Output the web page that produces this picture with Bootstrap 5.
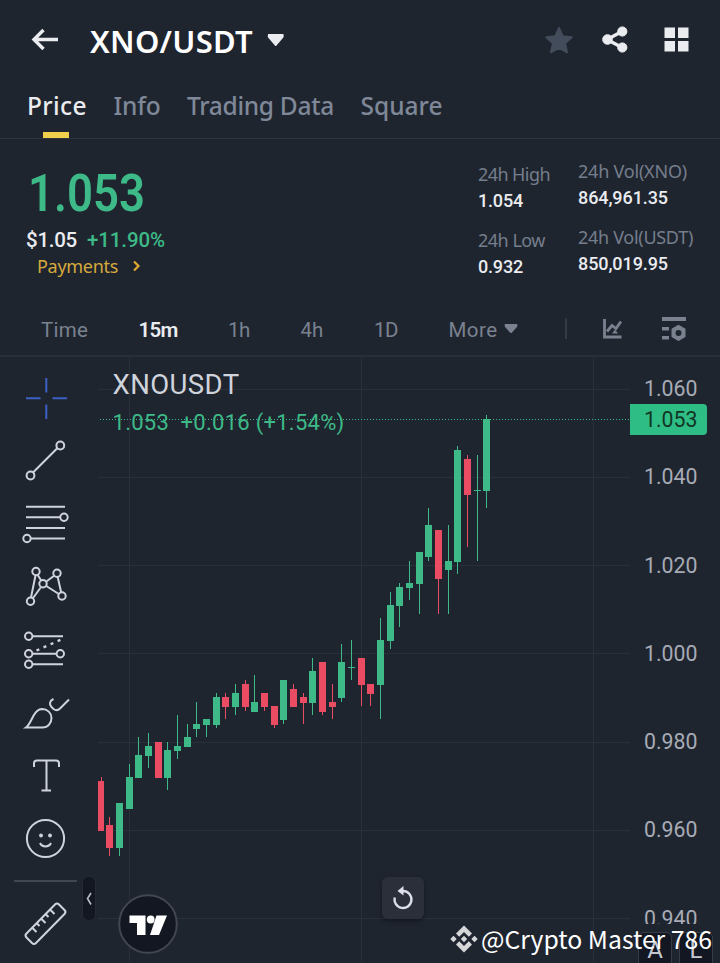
<!DOCTYPE html>
<html lang="en" data-bs-theme="dark">
<head>
<meta charset="utf-8">
<meta name="viewport" content="width=device-width, initial-scale=1">
<title>XNO/USDT</title>
<link href="https://cdn.jsdelivr.net/npm/bootstrap@5.3.0/dist/css/bootstrap.min.css" rel="stylesheet">
<style>
body{background:#1f252f;color:#eaecef;font-family:Roboto,"Liberation Sans",sans-serif;width:720px;height:963px;overflow:hidden}
svg{display:block;flex:none}
.fit{display:inline-block;white-space:pre;flex:none}
.top-bar{height:78px;padding:2px 30px 0 30px}
.pair{font-family:"Noto Sans",Roboto,sans-serif;font-size:31px;font-weight:650;line-height:40px;color:#fff;margin:1px 0 0 30px}
.tabs-row{height:61px;border-bottom:1px solid #2e353f;padding-left:27px;gap:26.500px}
.tab-item{font-family:"Noto Sans",Roboto,sans-serif;font-size:24.5px;font-weight:500;color:#7f8898;line-height:56px;height:60px}
.tab-item.on{color:#eaecef;display:flex;flex-direction:column;align-items:center}
.tab-item.on::after{content:"";width:26px;height:6px;background:#f0d04b;margin:-2px 2px 0 0}
.stats{height:164px;padding-left:27px}
.last{font-size:51px;font-weight:600;line-height:56px;color:#3dba87;margin:27px 0 0 1px}
.conv{font-size:20.5px;line-height:28px;font-weight:500;margin:4px 0 0 -1px;gap:10px}
.up{color:#3dba87}
.pay{font-family:"Noto Sans",Roboto,sans-serif;font-size:18px;line-height:24px;color:#d6a93c;margin-left:10px;gap:14px}
.stat-col{font-size:18px;line-height:26px}
.stat-col dt{font-family:"Noto Sans",Roboto,sans-serif;font-weight:400;color:#757e8c;line-height:24px;padding-bottom:2px}
.stat-col dd{margin:0 0 14px;font-weight:500;color:#eaecef}
.hi-lo{width:100px;padding-top:23px}.vols{width:142px;padding-top:20px}
.frames{height:54px;padding-left:41px;font-size:20.5px;color:#7a8290;border-bottom:2px solid #292f39}
.frames .fit{padding-top:2px;margin-right:50.500px}
.frames .fit.more{margin-right:0}
.frames .on{color:#eaecef;font-weight:600}
.chart{height:606px}
.tools{width:98px;padding-top:9px;overflow:hidden}
.tools svg{stroke:#cfd3dd;stroke-width:2;fill:none}
.axis{width:90px}
.axis-list{margin-top:-12px;height:579px;overflow:hidden}
.axis-list>div{height:88.3px;line-height:88.800px;font-size:21.300px;color:#a7abb5;padding-left:14px;flex:none}
.price-tag{left:630px;top:47px;width:77px;height:31px;background:#2ebd85;border-radius:0 4px 4px 0;color:#123524;font-size:21.300px;line-height:32px;padding-left:14px}
.legend{left:112.500px;top:11px}
.sym{font-size:27.5px;line-height:34px;color:#cfd3dc}
.chg{font-size:22px;line-height:30px;margin-top:6px;color:#3dba87}
.scale-btn{top:575px;width:34px;height:40px;background:#131722;border:1px solid #373c47;border-radius:6px;font-size:24px;line-height:34px;color:#c5c8d0;text-align:center}
.btn-a{left:638px}.btn-l{left:679px}
.reset{left:382px;top:520px;width:42px;height:42px;background:#2b2f3a;border-radius:6px;box-shadow:0 2px 5px #0006}
.fold{left:82px;top:519px}
.tv{left:118px;top:537px}
.wm{left:450px;top:564px;height:36px;gap:3px;color:#fff;font-family:"Noto Sans CJK SC",sans-serif;font-size:24.5px}
</style>
<script src="https://cdn.jsdelivr.net/npm/bootstrap@5.3.0/dist/js/bootstrap.bundle.min.js"></script>
</head>
<body>
<header class="top-bar d-flex align-items-center">
  <svg width="30" height="24" viewBox="30 28 30 24" fill="none" stroke="#eaecef" stroke-width="3.4"><path d="M58 39.5H34M43.5 30l-9.5 9.5 9.5 9.5"/></svg>
  <span class="pair"><span class="fit" data-w="163">XNO/USDT</span></span>
  <svg width="32" height="14" viewBox="254 33 32 14" fill="#eaecef"><path d="M269 34h15.500q.8 3-1 4.500l-6 7q-.8 1-1.600 0l-6-7q-1.800-1.500-.9-4.500z"/></svg>
  <svg class="ms-auto" width="28" height="28" viewBox="545 26 28 28" fill="#434c5b" stroke="#434c5b" stroke-width="2" stroke-linejoin="round"><path d="M559 28l3.700 8.300 9 1-6.700 6 2 9-8-4.500-8 4.500 2-9-6.700-6 9-1z"/></svg>
  <svg class="ms-4" width="67" height="28" viewBox="597 26 67 28" fill="#eaecef" stroke="#eaecef"><path d="M607 39.500l15-8M607 39.500l15 8" stroke-width="3.500"/><circle cx="607.500" cy="39.500" r="4.800"/><circle cx="622.300" cy="31.500" r="4.600"/><circle cx="622.300" cy="47.500" r="4.600"/></svg>
  <svg width="26" height="26" viewBox="664 27 26 26" fill="#eaecef"><path d="M664.500 27.500h10.500v10.500h-10.500zM678 27.500h10.500v10.500h-10.500zM664.500 41h10.500v10.500h-10.500zM678 41h10.500v10.500h-10.500z"/></svg>
</header>
<nav class="tabs-row d-flex">
  <div class="tab-item on"><span class="fit" data-w="60">Price</span></div>
  <div class="tab-item"><span class="fit" data-w="47">Info</span></div>
  <div class="tab-item"><span class="fit" data-w="147">Trading Data</span></div>
  <div class="tab-item"><span class="fit" data-w="82">Square</span></div>
</nav>
<section class="stats d-flex">
  <div class="flex-grow-1">
    <div class="last"><span class="fit" data-w="117" data-stretch>1.053</span></div>
    <div class="conv d-flex"><span class="fit" data-w="51">$1.05</span><span class="fit up" data-w="78">+11.90%</span></div>
    <div class="pay d-flex align-items-center"><span class="fit" data-w="81">Payments</span><svg width="10" height="12" viewBox="0 0 10 12" fill="none" stroke="#e0a92d" stroke-width="2.200"><path d="M2 1.500l4.500 4.500L2 10.500"/></svg></div>
  </div>
  <dl class="stat-col hi-lo mb-0"><dt><span class="fit" data-w="72">24h High</span></dt><dd><span class="fit" data-w="45">1.054</span></dd><dt><span class="fit" data-w="67">24h Low</span></dt><dd><span class="fit" data-w="45">0.932</span></dd></dl>
  <dl class="stat-col vols mb-0"><dt><span class="fit" data-w="109">24h Vol(XNO)</span></dt><dd><span class="fit" data-w="90">864,961.35</span></dd><dt><span class="fit" data-w="115">24h Vol(USDT)</span></dt><dd><span class="fit" data-w="90">850,019.95</span></dd></dl>
</section>
<div class="frames d-flex align-items-center">
  <span class="fit" data-w="47">Time</span>
  <span class="fit on" data-w="39">15m</span>
  <span class="fit" data-w="22">1h</span>
  <span class="fit" data-w="23">4h</span>
  <span class="fit" data-w="24">1D</span>
  <span class="fit more" data-w="49">More</span>
  <svg width="216" height="30" viewBox="497 314 216 30" fill="#7a8290"><path d="M504 324h12q1 2-.5 3.500l-4.500 5q-1 1-2 0l-4.500-5q-1.500-1.500-.5-3.500z"/><path d="M564.500 318.500h1v20.500h-1z" fill="#4a5260"/><path d="M603.500 319v18h17M606 331.500l5-6 4 3 5-7" fill="none" stroke="#7a8290" stroke-width="2.800"/><path d="M611 333.500l3-4 3 4z"/><path d="M661 317h24v4h-24zM661 327h7v3.500h-7zM661 336h7v3.500h-7z"/><path d="M677.500 325.800l6 3.500v7.200l-6 3.500-6-3.500v-7.200z" stroke="#7a8290" stroke-width="2" stroke-linejoin="round"/><circle cx="677.500" cy="333" r="3" fill="#1f252f"/></svg>
</div>
<main class="chart d-flex position-relative">
  <aside class="tools d-flex flex-column">
    <svg width="90" height="63" viewBox="0 366 90 63"><path d="M46.300 378v14.500M46.300 404.500v14.500M26 398.300h14.500M52.500 398.300h14.500" stroke="#3c60c4"/></svg>
    <svg width="90" height="63" viewBox="0 429 90 63"><path d="M33 472.500l24.500-24.500"/><circle cx="60.300" cy="445.500" r="3.900"/><circle cx="30.500" cy="475.500" r="3.900"/></svg>
    <svg width="90" height="63" viewBox="0 492 90 63"><path d="M26 506.700h39M26 517.300h34M26 528h39M31 538.500h34"/><circle cx="64" cy="517.300" r="3.700"/><circle cx="27" cy="538.500" r="3.700"/></svg>
    <svg width="90" height="63" viewBox="0 555 90 63"><path d="M35.500 575.500l-4.500 22M37.700 575l3.500 5.500M40.700 587.500l-8 11M46.300 581.500l7.500-5.500M46.300 586l12.500 8M57.700 577l3.500 15.500"/><circle cx="36" cy="571.500" r="3.700"/><circle cx="57" cy="573.300" r="3.700"/><circle cx="43" cy="583.800" r="3.700"/><circle cx="30.500" cy="601.300" r="3.700"/><circle cx="62" cy="596" r="3.700"/></svg>
    <svg width="90" height="63" viewBox="0 618 90 63"><path d="M33 636.300h30M33 653.700h23M33 664.300h30"/><path d="M36.500 650.500l26-11.500" stroke-width="2.400" stroke-dasharray="3 4.700"/><circle cx="28.700" cy="636.300" r="3.700"/><circle cx="28.700" cy="653.700" r="3.700"/><circle cx="60.300" cy="653.700" r="3.700"/><circle cx="28.700" cy="664.300" r="3.700"/></svg>
    <svg width="90" height="63" viewBox="0 681 90 63"><path d="M26 727.500c6-4 7-18 16-18.500c5.500 0 9.500 4 9.500 9c0 5-3.500 9.500-9 9.500zM53.500 699c-4 1.500-4.500 5.500-2 8l2 2q3.500 2.500 6.500-.5l9-9"/></svg>
    <svg width="90" height="63" viewBox="0 744 90 63"><path d="M34 767v-3.500q0-3 3-3h19q3 0 3 3v3.500M46.500 760.500v30M41.500 790.500h9.500"/></svg>
    <svg width="90" height="63" viewBox="0 807 90 63"><circle cx="45.500" cy="838.500" r="18.600"/><path d="M40 843c2 4.500 9 4.500 11 0"/><g fill="#cfd3dd" stroke="none"><circle cx="41" cy="835.500" r="1.900"/><circle cx="50" cy="835.500" r="1.900"/></g></svg>
    <svg width="90" height="92" viewBox="0 870 90 92"><path d="M14 881h63" stroke="#414752"/><path d="M55 904.500q2-2 4 0l5.500 5.500q2 2 0 4l-28.500 29q-2 2-4 0l-5.500-5.500q-2-2 0-4zM50 909.500l4.500 4.500M45.500 914l3 3M41 918.500l4.500 4.500M36.500 923l3 3M32 927.500l4.500 4.500"/></svg>
  </aside>
  <svg id="plot" width="532" height="606" viewBox="98 357 532 606" shape-rendering="crispEdges">
    <path d="M98 389.500h532M98 477.500h532M98 565.500h532M98 653.500h532M98 742.500h532M98 830.500h532M98 918.500h532M129.500 357v606M361.500 357v606M593.500 357v606" stroke="#2a303a" fill="none"/>
    <path d="M97 419.500h533" stroke="#3dba87" stroke-dasharray="1 2"/>
  </svg>
  <div class="axis">
    <div class="axis-list d-flex flex-column">
      <div>1.060</div><div>1.040</div><div>1.020</div><div>1.000</div><div>0.980</div><div>0.960</div><div>0.940</div>
    </div>
  </div>
  <div class="price-tag position-absolute">1.053</div>
  <div class="legend position-absolute">
    <div class="sym"><span class="fit" data-w="127">XNOUSDT</span></div>
    <div class="chg"><span class="fit" data-w="232">1.053  +0.016 (+1.54%)</span></div>
  </div>
  <svg class="fold position-absolute" width="14" height="45" viewBox="0 0 14 45"><rect x=".5" y=".5" width="13" height="44" rx="6" fill="#131722" stroke="#252a35"/><path d="M9 17l-3.500 5.500L9 28.500" fill="none" stroke="#b9bdc8" stroke-width="1.600"/></svg>
  <svg class="tv position-absolute" width="60" height="60" viewBox="0 0 60 60"><circle cx="30" cy="30" r="28.800" fill="#131722" stroke="#434651" stroke-width="2"/><path d="M11.500 21.500h16v19.500h-8.500V29h-7.500zM38.500 21.500h10.500l-8 19.500h-9z" fill="#fff"/><circle cx="32.700" cy="25.500" r="3.900" fill="#fff"/></svg>
  <div class="reset position-absolute d-flex align-items-center justify-content-center"><svg width="24" height="26" viewBox="0 0 24 26" fill="none" stroke="#dde0e8" stroke-width="2.400"><path d="M3.700 12.500A8.500 8.500 0 1 0 12 6H9"/><path d="M12.500 1v9.500L6.500 6z" fill="#dde0e8" stroke="none"/></svg></div>
  <div class="scale-btn btn-a position-absolute">A</div>
  <div class="scale-btn btn-l position-absolute">L</div>
  <div class="wm position-absolute d-flex align-items-center">
    <svg width="28" height="28" viewBox="-14 -14 28 28" fill="#d6d7d9"><path d="M0-13.500l8 8-3.200 3.200L0-7l-4.800 4.700L-8-5.500zM0 13.500l8-8-3.200-3.200L0 7l-4.800-4.700L-8 5.500zM0-3.200L3.200 0 0 3.200-3.200 0zM-10.500-3.200L-7.300 0l-3.200 3.200L-13.700 0zM10.500-3.200L13.700 0l-3.200 3.200L7.300 0z"/></svg>
    <span class="fit" data-w="231" data-stretch>@Crypto Master 786</span>
  </div>
</main>
<script>
// Candles: left edge, high, body top, body bottom, low, direction (1 up, 0 down)
const candles=[[98,777,781,831,831,0],[106,817,825,848,856,0],[116,803,803,848,856,1],[126,764,777,809,809,1],[135,737,755,778,778,1],[145,733,746,756,768,1],[155,742,742,778,778,0],[164,742,750,778,790,1],[174,715,746,751,759,1],[184,724,737,747,747,1],[193,702,724,729,737,1],[203,719,719,725,737,1],[213,693,697,725,728,1],[222,693,697,707,719,0],[232,684,693,707,715,1],[242,680,684,707,711,0],[251,675,702,712,712,1],[261,693,693,707,711,0],[271,706,706,725,728,0],[280,680,680,720,724,1],[290,684,689,707,707,0],[300,693,697,703,724,0],[309,658,671,703,715,1],[319,662,662,712,715,0],[329,684,702,707,719,0],[338,644,662,698,702,1],[348,640,667,668,680,1],[358,658,658,685,706,0],[367,684,684,694,706,0],[377,618,640,685,719,1],[387,592,605,641,649,1],[396,583,587,606,627,1],[406,561,583,588,600,1],[416,552,552,584,614,1],[425,508,525,557,561,1],[435,530,530,579,614,0],[445,525,561,570,614,1],[454,446,450,562,574,1],[464,455,459,495,547,0],[474,455,490,491,561,1],[483,415,419,491,508,1]];
const plot=document.getElementById('plot');
function bar(x,y,w,h,c){const r=document.createElementNS('http://www.w3.org/2000/svg','rect');for(const [k,v] of Object.entries({x,y,width:w,height:h,fill:c}))r.setAttribute(k,v);plot.append(r)}
candles.forEach(([x,hi,t,b,lo,up],i)=>{const c=up?'#3dba87':'#ea4d63';bar(x+3,hi,1,lo-hi,c);bar(x,t,i?7:6,b-t,c)});
document.querySelectorAll('.fit').forEach(e=>{
  const w=+e.dataset.w,n=e.getBoundingClientRect().width;
  if('stretch' in e.dataset){e.style.transformOrigin='left';e.style.transform='scaleX('+w/n+')'}
  else{e.style.letterSpacing=(w-n)/e.textContent.length+'px'}
});
</script>
</body>
</html>
